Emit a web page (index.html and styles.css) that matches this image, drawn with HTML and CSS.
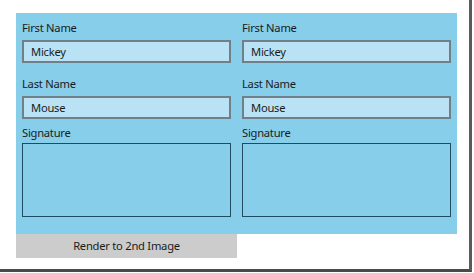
FILE: index.html
```html
<!DOCTYPE html>
<html>
<head>
<meta charset="utf-8">
<link rel="stylesheet" href="styles.css">
</head>
<body>
<div class="frame">
  <div class="panel">
    <div class="col">
      <div class="label">First Name</div>
      <div class="textbox">Mickey</div>
      <div class="label">Last Name</div>
      <div class="textbox">Mouse</div>
      <div class="label sig-label">Signature</div>
      <div class="sigbox"></div>
    </div>
    <div class="col">
      <div class="label">First Name</div>
      <div class="textbox">Mickey</div>
      <div class="label">Last Name</div>
      <div class="textbox">Mouse</div>
      <div class="label sig-label">Signature</div>
      <div class="sigbox"></div>
    </div>
  </div>
  <div class="button">Render to 2nd Image</div>
</div>
</body>
</html>
```
FILE: styles.css
```css
html, body {
  margin: 0;
  padding: 0;
  background: #ffffff;
}
body {
  width: 474px;
  height: 273px;
  overflow: hidden;
  font-family: "Noto Sans", "Open Sans", sans-serif;
  font-size: 11.2px;
  letter-spacing: -0.25px;
  color: #1b1b1b;
}
.frame {
  box-sizing: border-box;
  width: 472px;
  height: 272px;
  border-right: 3px solid #5a5a5a;
  border-bottom: 3px solid #4a4a4a;
  padding: 13px 0 0 16px;
}
.panel {
  width: 441px;
  height: 221px;
  box-sizing: border-box;
  background: #87ceeb;
  display: grid;
  grid-template-columns: 209px 209px;
  column-gap: 11px;
  padding: 6px 6px 0 6px;
}
.col {
  display: flex;
  flex-direction: column;
}
.label {
  height: 17px;
  line-height: 17px;
  margin-bottom: 4px;
}
.textbox {
  box-sizing: border-box;
  height: 23px;
  border: 2px solid #717f88;
  background: #b9e3f5;
  padding-left: 7px;
  line-height: 19px;
  margin-bottom: 12px;
}
.sig-label {
  margin-top: -7px;
  margin-bottom: 2px;
}
.sigbox {
  box-sizing: border-box;
  height: 74px;
  border: 1.5px solid #1f4c60;
}
.button {
  width: 221px;
  height: 24px;
  background: #cccccc;
  text-align: center;
  line-height: 24px;
  color: #1b1b1b;
}
```
